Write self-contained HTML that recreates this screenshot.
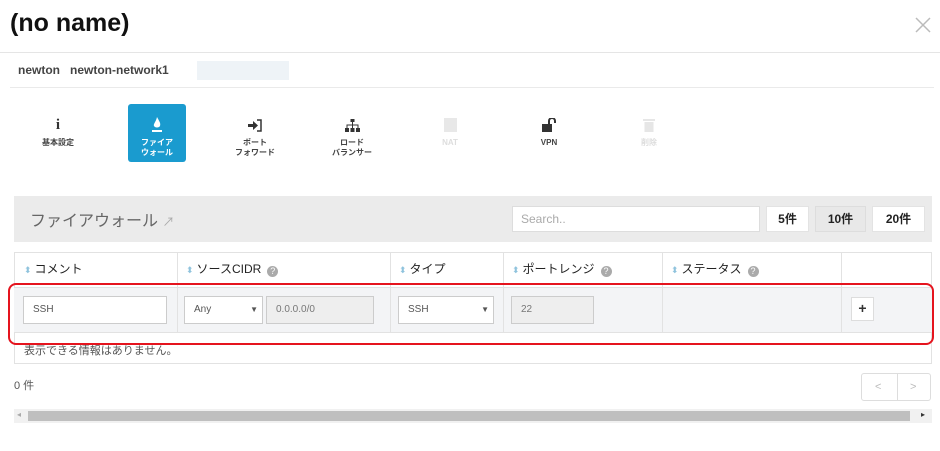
<!DOCTYPE html>
<html><head><meta charset="utf-8"><style>
*{box-sizing:border-box;margin:0;padding:0}
body{width:940px;height:451px;background:#fff;font-family:"Liberation Sans","Noto Sans CJK JP",sans-serif;color:#333;position:relative;overflow:hidden}
.a{position:absolute}
.nav{position:absolute;top:104px;width:58px;height:58px;text-align:center;font-size:8px;font-weight:bold;color:#444;line-height:10px}
.nav .ic{height:14px;margin-top:14px;margin-bottom:6px;display:flex;justify-content:center;align-items:center}
.btn{position:absolute;top:206px;height:26px;background:#fff;border:1px solid #e3e3e3;font-size:12px;font-weight:bold;text-align:center;line-height:24px;color:#222}
.hd{position:absolute;top:252px;height:35px;font-size:12px;color:#222;line-height:35px}
.s{color:#8fc3dd;font-size:9px;margin-right:3px}
.q{display:inline-block;width:11px;height:11px;border-radius:50%;background:#aaa;color:#fff;font-size:9px;line-height:11px;text-align:center;margin-left:6px;vertical-align:-1px}
.inp{position:absolute;height:28px;border:1px solid #ccc;background:#fff;font-size:10px;line-height:26px;padding-left:9px;color:#555}
.dis{background:#eee;color:#777}
.vl{position:absolute;top:252px;height:81px;width:1px;background:#e2e2e2}
</style></head><body>
<div class="a" style="left:10px;top:9px;font-size:25px;font-weight:bold;color:#111">(no name)</div>
<svg class="a" style="left:915px;top:17px" width="16" height="16"><path d="M1 1L15 15M15 1L1 15" stroke="#bbb" stroke-width="1.5"/></svg>
<div class="a" style="left:0;top:52px;width:940px;height:1px;background:#e5e5e5"></div>
<div class="a" style="left:18px;top:63px;font-size:12px;font-weight:bold;color:#444">newton&nbsp;&nbsp;&nbsp;newton-network1</div>
<div class="a" style="left:197px;top:61px;width:92px;height:19px;background:#eef3f7"></div>
<div class="a" style="left:10px;top:87px;width:924px;height:1px;background:#eaeaea"></div>

<div class="nav" style="left:29px"><div class="ic"><span style="font-size:15px;font-weight:bold;font-family:'Liberation Serif',serif;color:#333">i</span></div>基本設定</div>
<div class="nav" style="left:128px;background:#1a9bcf;border-radius:3px;color:#fff"><div class="ic"><svg width="12" height="16"><path d="M6 0C8 4 10 6 9 9C8 11 4 11 3 9C2 7 5 5 6 0Z" fill="#fff"/><rect x="1" y="13" width="10" height="2" fill="#fff"/></svg></div>ファイア<br>ウォール</div>
<div class="nav" style="left:226px"><div class="ic"><svg width="14" height="13"><path d="M0 5h5V2l5 4.5-5 4.5V8H0z" fill="#333"/><path d="M9 1h4v11H9" fill="none" stroke="#333" stroke-width="1.5"/></svg></div>ポート<br>フォワード</div>
<div class="nav" style="left:323px"><div class="ic"><svg width="15" height="13"><rect x="5.5" y="0" width="4" height="3" fill="#333"/><path d="M7.5 3v3M2 9V6h11v3M7.5 6v3" stroke="#333" fill="none"/><rect x="0" y="9" width="4" height="4" fill="#333"/><rect x="5.5" y="9" width="4" height="4" fill="#333"/><rect x="11" y="9" width="4" height="4" fill="#333"/></svg></div>ロード<br>バランサー</div>
<div class="nav" style="left:421px;color:#ddd"><div class="ic"><div style="width:13px;height:14px;background:#e8e8e8"></div></div>NAT</div>
<div class="nav" style="left:520px"><div class="ic"><svg width="15" height="14"><rect x="0" y="6" width="10" height="8" fill="#333"/><path d="M7 6V3a3 3 0 0 1 6 0v2" fill="none" stroke="#333" stroke-width="2"/></svg></div>VPN</div>
<div class="nav" style="left:620px;color:#ddd"><div class="ic"><svg width="12" height="14"><rect x="0" y="1" width="12" height="2" fill="#e6e6e6"/><rect x="1.5" y="4" width="9" height="10" fill="#e6e6e6"/></svg></div>削除</div>

<div class="a" style="left:14px;top:196px;width:918px;height:46px;background:#ebebeb"></div>
<div class="a" style="left:30px;top:207px;font-size:16px;color:#666">ファイアウォール <span style="font-size:12px;color:#aaa">↗</span></div>
<div class="a" style="left:512px;top:206px;width:248px;height:26px;background:#fff;border:1px solid #ddd;font-size:12px;color:#aaa;line-height:24px;padding-left:8px">Search..</div>
<div class="btn" style="left:766px;width:43px">5件</div>
<div class="btn" style="left:815px;width:51px;background:#e8e8e8;border-color:#ddd">10件</div>
<div class="btn" style="left:872px;width:53px">20件</div>

<div class="a" style="left:14px;top:252px;width:918px;height:112px;border:1px solid #e2e2e2"></div>
<div class="a" style="left:14px;top:287px;width:918px;height:46px;background:#f3f4f6;border-top:1px solid #e2e2e2;border-bottom:1px solid #e2e2e2"></div>
<div class="vl" style="left:177px"></div><div class="vl" style="left:390px"></div><div class="vl" style="left:503px"></div><div class="vl" style="left:662px"></div><div class="vl" style="left:841px"></div>
<div class="hd" style="left:24px"><span class="s">⬍</span>コメント</div>
<div class="hd" style="left:186px"><span class="s">⬍</span>ソースCIDR<span class="q">?</span></div>
<div class="hd" style="left:399px"><span class="s">⬍</span>タイプ</div>
<div class="hd" style="left:512px"><span class="s">⬍</span>ポートレンジ<span class="q">?</span></div>
<div class="hd" style="left:671px"><span class="s">⬍</span>ステータス<span class="q">?</span></div>
<div class="inp" style="left:23px;top:296px;width:144px">SSH</div>
<div class="inp" style="left:184px;top:296px;width:79px">Any<span style="position:absolute;right:4px;font-size:8px">▼</span></div>
<div class="inp dis" style="left:266px;top:296px;width:108px">0.0.0.0/0</div>
<div class="inp" style="left:398px;top:296px;width:96px">SSH<span style="position:absolute;right:4px;font-size:8px">▼</span></div>
<div class="inp dis" style="left:511px;top:296px;width:83px">22</div>
<div class="a" style="left:851px;top:297px;width:23px;height:24px;background:#fff;border:1px solid #ddd;text-align:center;font-weight:bold;font-size:14px;line-height:21px">+</div>
<div class="a" style="left:24px;top:342px;font-size:11px;color:#555">表示できる情報はありません。</div>
<div class="a" style="left:8px;top:283px;width:926px;height:62px;border:2px solid #e5141e;border-radius:8px"></div>

<div class="a" style="left:14px;top:377px;font-size:11px;color:#555">0 件</div>
<div class="a" style="left:861px;top:373px;width:70px;height:28px;border:1px solid #ddd;border-radius:3px;font-size:11px;color:#bbb;line-height:26px"><span style="position:absolute;left:13px">&lt;</span><span style="position:absolute;left:35px;top:0;width:1px;height:26px;background:#ddd"></span><span style="position:absolute;left:48px">&gt;</span></div>
<div class="a" style="left:14px;top:409px;width:918px;height:14px;background:#f1f1f1"></div>
<div class="a" style="left:28px;top:411px;width:882px;height:10px;background:#bfbfbf"></div>
<div class="a" style="left:17px;top:410px;font-size:8px;color:#aaa">◂</div>
<div class="a" style="left:921px;top:410px;font-size:8px;color:#333">▸</div>
</body></html>
